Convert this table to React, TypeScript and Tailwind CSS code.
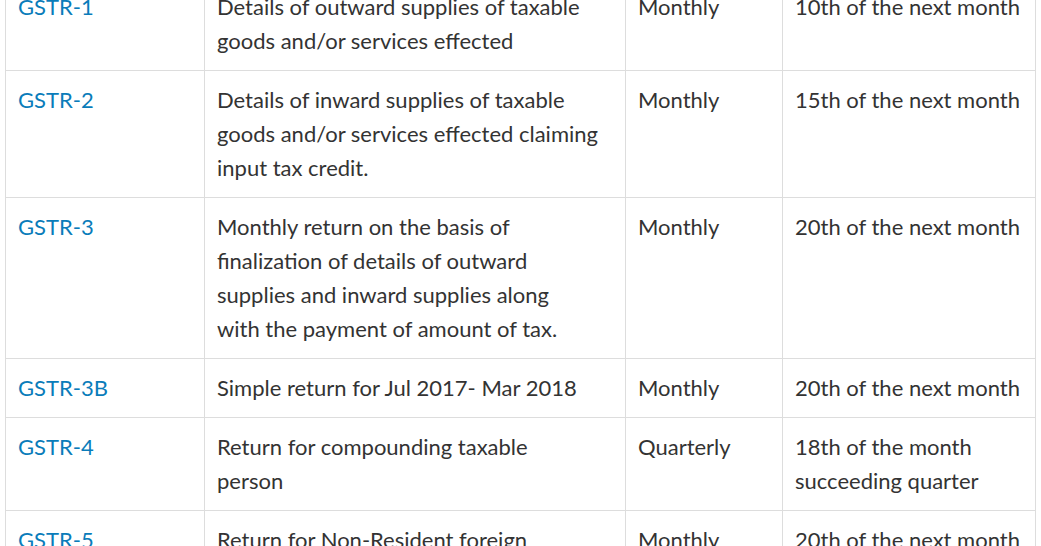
import React from 'react';

type Row = {
  form: string;
  details: string[];
  frequency: string;
  due: string[];
};

const rows: Row[] = [
  {
    form: 'GSTR-1',
    details: ['Details of outward supplies of taxable', 'goods and/or services effected'],
    frequency: 'Monthly',
    due: ['10th of the next month'],
  },
  {
    form: 'GSTR-2',
    details: ['Details of inward supplies of taxable', 'goods and/or services effected claiming', 'input tax credit.'],
    frequency: 'Monthly',
    due: ['15th of the next month'],
  },
  {
    form: 'GSTR-3',
    details: [
      'Monthly return on the basis of',
      'finalization of details of outward',
      'supplies and inward supplies along',
      'with the payment of amount of tax.',
    ],
    frequency: 'Monthly',
    due: ['20th of the next month'],
  },
  {
    form: 'GSTR-3B',
    details: ['Simple return for Jul 2017- Mar 2018'],
    frequency: 'Monthly',
    due: ['20th of the next month'],
  },
  {
    form: 'GSTR-4',
    details: ['Return for compounding taxable', 'person'],
    frequency: 'Quarterly',
    due: ['18th of the month', 'succeeding quarter'],
  },
  {
    form: 'GSTR-5',
    details: ['Return for Non-Resident foreign', 'taxable person'],
    frequency: 'Monthly',
    due: ['20th of the next month'],
  },
];

function Lines({ lines }: { lines: string[] }) {
  return (
    <>
      {lines.map((line, i) => (
        <span key={i} className="block whitespace-nowrap">
          {line}
        </span>
      ))}
    </>
  );
}

export default function App() {
  return (
    <div className="h-[546px] overflow-hidden bg-white">
      <div className="-mt-[23px] pl-[5px]">
        <table
          className="table-fixed border-collapse text-[22px] leading-[34px] text-[#333]"
          style={{ fontFamily: 'Lato, "Open Sans", sans-serif' }}
        >
          <colgroup>
            <col className="w-[199px]" />
            <col className="w-[421px]" />
            <col className="w-[157px]" />
            <col className="w-[253px]" />
          </colgroup>
          <tbody>
            {rows.map((row) => (
              <tr key={row.form}>
                <td className="border border-[#dddddd] px-3 py-3 align-top">
                  <a href="#" className="text-[#0a7cba]">
                    {row.form}
                  </a>
                </td>
                <td className="border border-[#dddddd] px-3 py-3 align-top">
                  <Lines lines={row.details} />
                </td>
                <td className="border border-[#dddddd] px-3 py-3 align-top">{row.frequency}</td>
                <td className="border border-[#dddddd] px-3 py-3 align-top">
                  <Lines lines={row.due} />
                </td>
              </tr>
            ))}
          </tbody>
        </table>
      </div>
    </div>
  );
}
